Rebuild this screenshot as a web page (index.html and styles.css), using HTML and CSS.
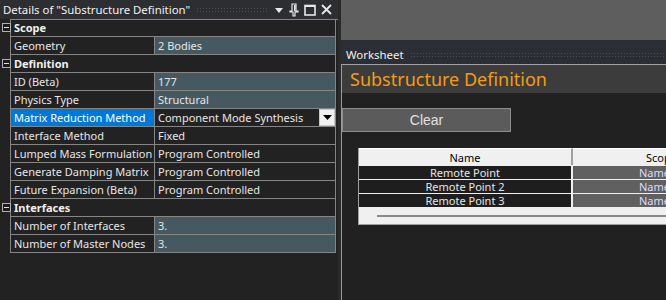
FILE: index.html
```html
<!DOCTYPE html>
<html>
<head>
<meta charset="utf-8">
<link rel="stylesheet" href="styles.css">
</head>
<body>
<div class="app">
  <div class="left">
    <div class="titlebar">
      <span class="title">Details of "Substructure Definition"</span>
      <span class="grip"></span>
      <span class="ticons">
        <svg width="10" height="8" viewBox="0 0 10 8"><path d="M1 2 L9 2 L5 7 Z" fill="#e8e8e8"/></svg>
        <svg width="10" height="14" viewBox="0 0 10 14"><path d="M3 1 H7 V8 H9 V9 H6 V13 H4 V9 H1 V8 H3 Z" fill="none" stroke="#e8e8e8" stroke-width="1.2"/><rect x="5" y="2" width="1.5" height="6" fill="#e8e8e8"/></svg>
        <svg width="12" height="12" viewBox="0 0 12 12"><rect x="1" y="1.5" width="10" height="9.5" fill="none" stroke="#e8e8e8" stroke-width="1.6"/><rect x="1" y="1" width="10" height="2" fill="#e8e8e8"/></svg>
        <svg width="11" height="11" viewBox="0 0 11 11"><path d="M1 1 L10 10 M10 1 L1 10" stroke="#e8e8e8" stroke-width="1.8"/></svg>
      </span>
    </div>
    <div class="grid">
      <div class="gut"><span class="box"></span></div><div class="hdr">Scope</div>
      <div class="gut"></div><div class="lab">Geometry</div><div class="val ro">2 Bodies</div>
      <div class="gut"><span class="box"></span></div><div class="hdr">Definition</div>
      <div class="gut"></div><div class="lab">ID (Beta)</div><div class="val ro">177</div>
      <div class="gut"></div><div class="lab">Physics Type</div><div class="val ro">Structural</div>
      <div class="gut"></div><div class="lab sel">Matrix Reduction Method</div><div class="val drop"><span>Component Mode Synthesis</span><span class="dbtn"><svg width="9" height="5" viewBox="0 0 9 5"><path d="M0 0 H9 L4.5 5 Z" fill="#000"/></svg></span></div>
      <div class="gut"></div><div class="lab">Interface Method</div><div class="val">Fixed</div>
      <div class="gut"></div><div class="lab">Lumped Mass Formulation</div><div class="val">Program Controlled</div>
      <div class="gut"></div><div class="lab">Generate Damping Matrix</div><div class="val">Program Controlled</div>
      <div class="gut"></div><div class="lab">Future Expansion (Beta)</div><div class="val">Program Controlled</div>
      <div class="gut"><span class="box"></span></div><div class="hdr">Interfaces</div>
      <div class="gut"></div><div class="lab">Number of Interfaces</div><div class="val ro">3.</div>
      <div class="gut"></div><div class="lab">Number of Master Nodes</div><div class="val ro">3.</div>
    </div>
  </div>
  <div class="split"></div>
  <div class="right">
    <div class="graybox"></div>
    <div class="wsbar"><span class="wstitle">Worksheet</span><span class="grip"></span></div>
    <div class="content">
      <div class="banner">Substructure Definition</div>
      <div class="body">
        <button class="clear">Clear</button>
        <div class="tbl">
          <div class="trow head"><div class="c1">Name</div><div class="c2">Scope</div></div>
          <div class="trow"><div class="c1">Remote Point</div><div class="c2">Name</div></div>
          <div class="trow"><div class="c1">Remote Point 2</div><div class="c2">Name</div></div>
          <div class="trow"><div class="c1">Remote Point 3</div><div class="c2">Name</div></div>
          <div class="scroll"><div class="thumb"></div></div>
        </div>
      </div>
    </div>
  </div>
</div>
</body>
</html>
```

FILE: styles.css
```css
* { box-sizing: border-box; }
html, body { margin: 0; padding: 0; }
body {
  width: 666px; height: 300px; overflow: hidden;
  background: #222222;
  font-family: "Noto Sans", "Open Sans", sans-serif;
  font-size: 11px;
  color: #e6e6e6;
}
.app { display: flex; width: 666px; height: 300px; }
.left { width: 338px; flex: none; background: #222222; }
.titlebar {
  height: 19px; background: #2d2e32;
  display: flex; align-items: center; padding-left: 3px; padding-right: 6px;
}
.title { color: #f2f2f2; font-size: 11.4px; white-space: nowrap; }
.grip {
  flex: 1; height: 5px; margin: 0 6px;
  background-image: radial-gradient(circle, #4a4c52 0.8px, transparent 1px);
  background-size: 3px 3px;
}
.ticons { display: flex; align-items: center; gap: 5px; }
.ticons svg { display: block; }

.grid {
  display: grid;
  position: relative;
  grid-template-columns: 11px 144px 181px;
  grid-auto-rows: 18px;
}
.grid::before {
  content: ""; position: absolute; left: 11px; right: 0; top: 0; height: 1px; background: #858585;
}
.gut { position: relative; border-right: 1px solid #858585; }
.box {
  position: absolute; left: 2px; top: 4px; width: 9px; height: 9px;
  border: 1px solid #b0b0b0; background: #1c1c1c;
}
.box::after {
  content: ""; position: absolute; left: 1px; top: 3px; width: 5px; height: 1px; background: #e0e0e0;
}
.hdr, .lab, .val {
  border-bottom: 1px solid #858585; border-right: 1px solid #858585;
  padding-left: 3px; line-height: 17px; white-space: nowrap; overflow: hidden;
}
.grid > .hdr:nth-child(2) { line-height: 18px; }
.hdr { grid-column: 2 / 4; font-weight: bold; background: #222222; color: #f0f0f0; }
.lab { background: #222222; }
.lab.sel { background: #0078d7; color: #ffffff; }
.val { background: #222222; }
.val.ro { background: #465961; }
.val.drop { display: flex; justify-content: space-between; align-items: stretch; padding-right: 0; }
.dbtn {
  width: 16px; background: #f0f0f0; display: flex; align-items: center; justify-content: center;
  border: 1px solid #c8c8c8;
}

.split { width: 3px; flex: none; background: #2a2a2a; }
.right { flex: 1; display: flex; flex-direction: column; background: #2b2d33; }
.graybox { height: 40px; background: #5e5e5e; }
.wsbar {
  margin-top: 5px; height: 19px; background: #2b2e34;
  display: flex; align-items: center; padding-left: 5px;
}
.wstitle { color: #f0f0f0; font-size: 11.4px; }
.content {
  flex: 1; background: #212121;
  border-top: 1px solid #a0a0a0; border-left: 1px solid #9a9a9a;
  display: flex; flex-direction: column;
}
.banner {
  height: 28px; background: #3c3c3c; color: #f39c12;
  font-size: 18px; line-height: 28px; padding-left: 8px; white-space: nowrap;
}
.body { flex: 1; padding-top: 15px; }
.clear {
  display: block; width: 169px; height: 24px; margin: 0;
  background: #5b5b5b; border: 1px solid #8e8e8e;
  color: #e0e0e0; font-family: "Liberation Sans", Arial, sans-serif; font-size: 14px;
}
.tbl { margin: 16px 0 0 16px; width: 340px; background: #f0f0f0; border-left: 1px solid #a0a0a0; border-bottom: 1px solid #a0a0a0; }
.trow { display: flex; height: 14px; border-bottom: 1px solid #f0f0f0; }
.trow .c1 { width: 214px; flex: none; background: #1e1e1e; color: #e6e6e6; text-align: center; line-height: 13px; border-right: 2px solid #f0f0f0; white-space: nowrap; overflow: hidden; }
.trow .c2 { flex: 1; background: #606060; color: #dcdcff; text-align: left; padding-left: 66px; line-height: 13px; white-space: nowrap; overflow: hidden; }
.trow.head { height: 18px; }
.trow.head .c1, .trow.head .c2 { background: #f0f0f0; color: #000; line-height: 17px; border-top: 1px solid #fff; }
.trow.head .c1 { border-right: 2px solid #a0a0a0; }
.trow.head .c2 { padding-left: 73px; }
.scroll { height: 16px; position: relative; }
.thumb { position: absolute; left: 18px; right: 0; top: 7px; height: 2px; background: #8a8a8a; }
```
